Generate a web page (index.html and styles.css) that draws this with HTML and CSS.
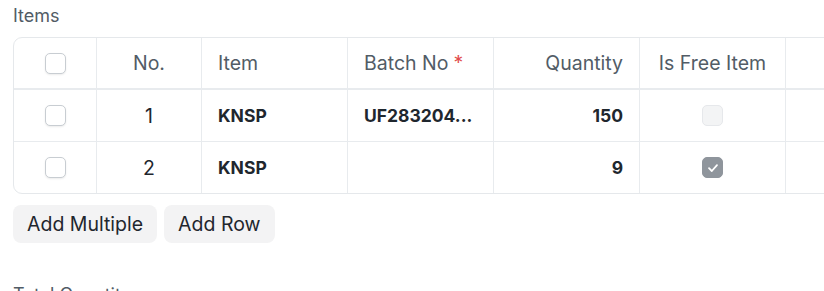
FILE: index.html
```html
<!DOCTYPE html>
<html lang="en">
<head>
  <meta charset="UTF-8" />
  <title>Items</title>
  <link rel="stylesheet" href="styles.css">
</head>
<body>
  <div class="section">
    <div class="label">Items</div>

    <div class="grid">
      <!-- header -->
      <div class="row head">
        <div class="cell check"><span class="box"></span></div>
        <div class="cell center">No.</div>
        <div class="cell">Item</div>
        <div class="cell">Batch No <span class="req">*</span></div>
        <div class="cell right">Quantity</div>
        <div class="cell center">Is Free Item</div>
        <div class="cell"></div>
      </div>

      <div class="row">
        <div class="cell check"><span class="box"></span></div>
        <div class="cell center">1</div>
        <div class="cell bold">KNSP</div>
        <div class="cell bold">UF283204...</div>
        <div class="cell right bold">150</div>
        <div class="cell center"><span class="flag"></span></div>
        <div class="cell"></div>
      </div>

      <div class="row last">
        <div class="cell check"><span class="box"></span></div>
        <div class="cell center">2</div>
        <div class="cell bold">KNSP</div>
        <div class="cell bold"></div>
        <div class="cell right bold">9</div>
        <div class="cell center">
          <span class="flag on">
            <svg width="12" height="10" viewBox="0 0 12 10"><path d="M2 5.2 L4.8 8 L10 2.2" fill="none" stroke="#fff" stroke-width="1.8" stroke-linecap="round" stroke-linejoin="round"/></svg>
          </span>
        </div>
        <div class="cell"></div>
      </div>
    </div>

    <div class="actions">
      <button class="btn">Add Multiple</button>
      <button class="btn">Add Row</button>
    </div>

    <div class="label next">Total Quantity</div>
  </div>
</body>
</html>
```

FILE: styles.css
```css
body {
  margin: 0;
  font-family: Inter, "Noto Sans", sans-serif;
  color: #1f272e;
  background: #fff;
  overflow: hidden;
}

.section {
  padding: 4px 0 0 13px;
  width: 900px;
}

.label {
  font-size: 18px;
  color: #525c66;
  line-height: 24px;
  margin-bottom: 9px;
}

.label.next {
  margin-top: 40px;
}

.grid {
  border: 1px solid #e5e8eb;
  border-radius: 9px;
  width: 860px;
  overflow: hidden;
}

.row {
  display: grid;
  grid-template-columns: 83px 105px 146px 146px 146px 146px 1fr;
  height: 51px;
  border-bottom: 1px solid #e8ebee;
}

.row.head {
  border-bottom: 2px solid #e8ebee;
  height: 50px;
}

.row.last {
  border-bottom: none;
}

.cell {
  display: flex;
  align-items: center;
  padding: 0 16px;
  border-right: 1px solid #e8ebee;
  font-size: 19.5px;
  white-space: nowrap;
}

.cell:last-child {
  border-right: none;
}

.head .cell {
  color: #525c66;
}

.center {
  justify-content: center;
}

.right {
  justify-content: flex-end;
}

.bold {
  font-weight: 700;
  font-size: 17.5px;
}

.check {
  justify-content: center;
  padding: 0;
}

.req {
  color: #e24c4c;
  margin-left: 5px;
}

.box {
  width: 19px;
  height: 19px;
  border: 1px solid #c8cdd2;
  border-radius: 5px;
  box-shadow: 0 1px 2px rgba(0, 0, 0, 0.08);
  background: #fff;
}

.flag {
  width: 21px;
  height: 21px;
  border: 1px solid #e6e8eb;
  border-radius: 5px;
  background: #f3f4f5;
  display: flex;
  align-items: center;
  justify-content: center;
  box-sizing: border-box;
}

.flag.on {
  background: #8f959c;
  border-color: #8f959c;
}

.actions {
  display: flex;
  gap: 7px;
  margin-top: 11px;
}

.btn {
  font-family: inherit;
  font-size: 19.5px;
  color: #1f272e;
  background: #f3f3f4;
  border: none;
  border-radius: 8px;
  height: 38px;
  padding: 0 14px;
}
```
